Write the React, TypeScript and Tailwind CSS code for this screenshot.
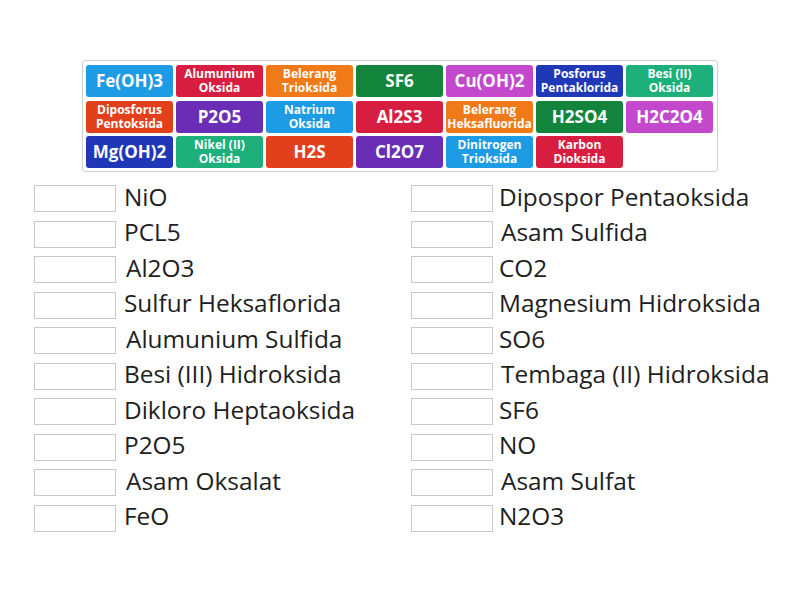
const C = {
  lblue: 'bg-[#1d9be4]',
  red: 'bg-[#d81e40]',
  orange: 'bg-[#f07a18]',
  dgreen: 'bg-[#13843c]',
  magenta: 'bg-[#c348cb]',
  dblue: 'bg-[#2038b8]',
  teal: 'bg-[#1db07b]',
  redorange: 'bg-[#e2401c]',
  purple: 'bg-[#6a2db6]'
};

const tiles: {text: string[]; color: string}[] = [
  {text: ['Fe(OH)3'], color: C.lblue},
  {text: ['Alumunium', 'Oksida'], color: C.red},
  {text: ['Belerang', 'Trioksida'], color: C.orange},
  {text: ['SF6'], color: C.dgreen},
  {text: ['Cu(OH)2'], color: C.magenta},
  {text: ['Posforus', 'Pentaklorida'], color: C.dblue},
  {text: ['Besi (II)', 'Oksida'], color: C.teal},
  {text: ['Diposforus', 'Pentoksida'], color: C.redorange},
  {text: ['P2O5'], color: C.purple},
  {text: ['Natrium', 'Oksida'], color: C.lblue},
  {text: ['Al2S3'], color: C.red},
  {text: ['Belerang', 'Heksafluorida'], color: C.orange},
  {text: ['H2SO4'], color: C.dgreen},
  {text: ['H2C2O4'], color: C.magenta},
  {text: ['Mg(OH)2'], color: C.dblue},
  {text: ['Nikel (II)', 'Oksida'], color: C.teal},
  {text: ['H2S'], color: C.redorange},
  {text: ['Cl2O7'], color: C.purple},
  {text: ['Dinitrogen', 'Trioksida'], color: C.lblue},
  {text: ['Karbon', 'Dioksida'], color: C.red}
];

const left = [
  'NiO',
  'PCL5',
  'Al2O3',
  'Sulfur Heksaflorida',
  'Alumunium Sulfida',
  'Besi (III) Hidroksida',
  'Dikloro Heptaoksida',
  'P2O5',
  'Asam Oksalat',
  'FeO'
];

const right = [
  'Dipospor Pentaoksida',
  'Asam Sulfida',
  'CO2',
  'Magnesium Hidroksida',
  'SO6',
  'Tembaga (II) Hidroksida',
  'SF6',
  'NO',
  'Asam Sulfat',
  'N2O3'
];

function Row({label, gap}: {label: string; gap: string}) {
  const nudge = /^[AT]/.test(label) ? 'pl-[2px]' : '';
  return (
    <div className="flex h-[35.5px] items-start">
      <div className="h-[27px] w-[82px] shrink-0 border border-[#c8c8c8] bg-white" />
      <div className={`flex h-[27px] items-center ${gap}`}>
        <span className={`-translate-y-[2px] whitespace-nowrap text-[24.4px] leading-[32px] text-[#1e1e1e] ${nudge}`}>
          {label}
        </span>
      </div>
    </div>
  );
}

export default function App() {
  return (
    <div className="h-[600px] w-[800px] bg-white font-['Open_Sans',sans-serif]">
      <div className="flex justify-center pt-[60px]">
        <div className="grid w-[636px] grid-cols-[repeat(7,87px)] gap-x-[3px] gap-y-[3.5px] rounded-[3px] border border-[#cfcfcf] px-[3px] pb-[3px] pt-[4px]">
          {tiles.map((t, i) => (
            <div
              key={i}
              className={`flex h-[32px] flex-col items-center justify-center rounded-[3px] text-center font-bold text-white ${t.color}`}
            >
              {t.text.length === 1 ? (
                <span className="text-[17px] leading-[20px]">{t.text[0]}</span>
              ) : (
                t.text.map((l) => (
                  <span key={l} className="whitespace-nowrap text-[12px] leading-[14px]">
                    {l}
                  </span>
                ))
              )}
            </div>
          ))}
        </div>
      </div>
      <div className="mt-[13px] grid grid-cols-[377px_1fr] pl-[34px]">
        <div className="flex flex-col">
          {left.map((l) => (
            <Row key={l} label={l} gap="ml-[8px]" />
          ))}
        </div>
        <div className="flex flex-col">
          {right.map((l) => (
            <Row key={l} label={l} gap="ml-[6px]" />
          ))}
        </div>
      </div>
    </div>
  );
}
